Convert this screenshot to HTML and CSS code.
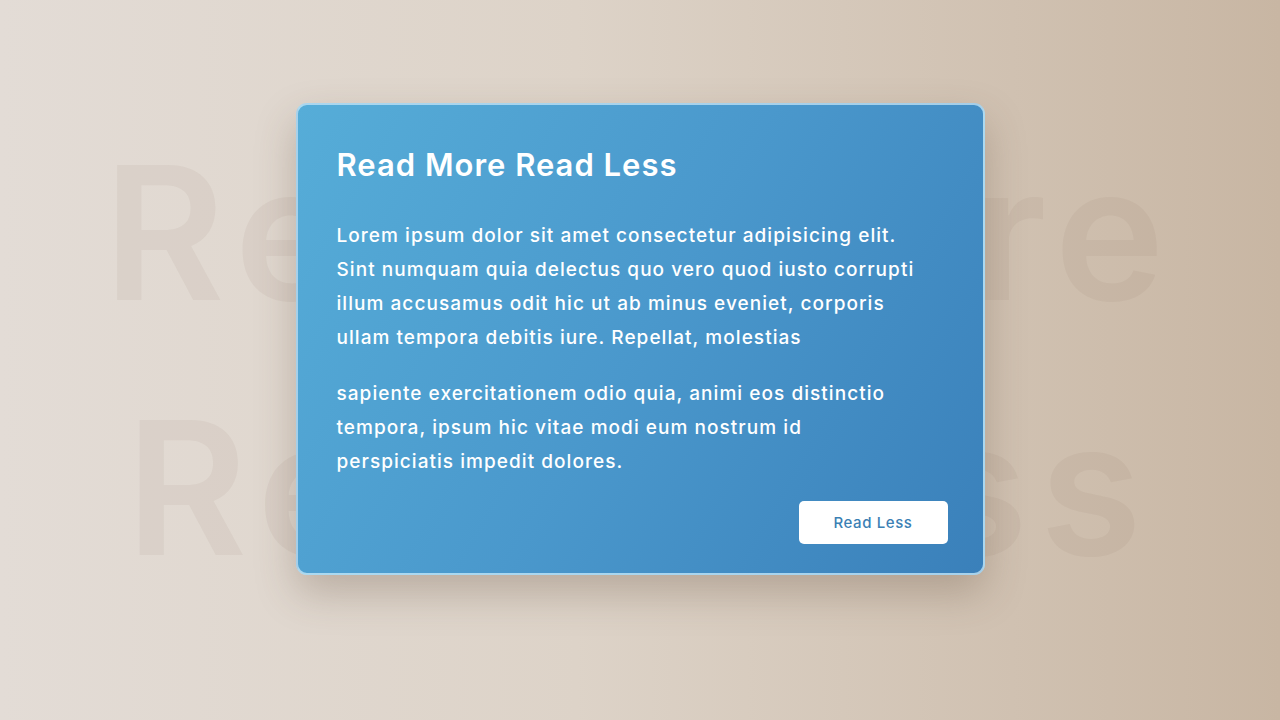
FILE: index.html
```html
<!DOCTYPE html>
<html lang="en">
<head>
<meta charset="utf-8">
<title>Read More Read Less</title>
<link rel="stylesheet" href="styles.css">
</head>
<body>
<main class="stage">
  <div class="backdrop" aria-hidden="true">Read More<br>Read Less</div>
  <section class="card">
    <h1 class="card-title">Read More Read Less</h1>
    <p class="card-text">Lorem ipsum dolor sit amet consectetur adipisicing elit. Sint numquam quia delectus quo vero quod iusto corrupti illum accusamus odit hic ut ab minus eveniet, corporis ullam tempora debitis iure. Repellat, molestias</p>
    <p class="card-text">sapiente exercitationem odio quia, animi eos distinctio tempora, ipsum hic vitae modi eum nostrum id perspiciatis impedit dolores.</p>
    <div class="card-actions">
      <button class="btn">Read Less</button>
    </div>
  </section>
</main>
</body>
</html>
```
FILE: styles.css
```css
* { box-sizing: border-box; }
html, body { margin: 0; padding: 0; }
body {
  width: 1280px;
  height: 720px;
  overflow: hidden;
  font-family: "Inter", "Noto Sans", sans-serif;
  background: linear-gradient(90deg, #e3dcd6 0%, #ddd3c8 45%, #c8b6a3 100%);
}
.stage {
  display: grid;
  width: 1280px;
  height: 720px;
  place-items: center;
}
.backdrop, .card { grid-area: 1 / 1; }
.backdrop {
  font-family: "Inter", "Noto Sans", sans-serif;
  font-weight: 600;
  font-size: 186px;
  line-height: 255px;
  text-align: center;
  color: rgba(120, 95, 70, 0.065);
  letter-spacing: 12px;
  white-space: nowrap;
}
.card {
  width: 689px;
  margin-bottom: 43px;
  padding: 38px 35px 29px 39px;
  border: 2px solid rgba(200, 232, 248, 0.75);
  border-radius: 11px;
  background: linear-gradient(120deg, #56add8 0%, #4a98cc 50%, #3a80ba 100%);
  box-shadow: 0 18px 40px rgba(90, 70, 50, 0.28);
  color: #fff;
}
.card-title {
  margin: 0 0 32px;
  font-size: 31px;
  font-weight: 600;
  line-height: 44px;
  letter-spacing: 1px;
}
.card-text {
  max-width: 584px;
  margin: 0 0 22px;
  font-size: 19px;
  font-weight: 500;
  line-height: 34px;
  letter-spacing: 1.05px;
}
.card-actions {
  display: flex;
  justify-content: flex-end;
  margin-top: 12px;
}
.btn {
  width: 149px;
  height: 43px;
  border: 0;
  border-radius: 5px;
  background: #fff;
  color: #3b80b4;
  font-family: "Inter", "Noto Sans", sans-serif;
  font-size: 15px;
  font-weight: 500;
  letter-spacing: 0.6px;
}
```
